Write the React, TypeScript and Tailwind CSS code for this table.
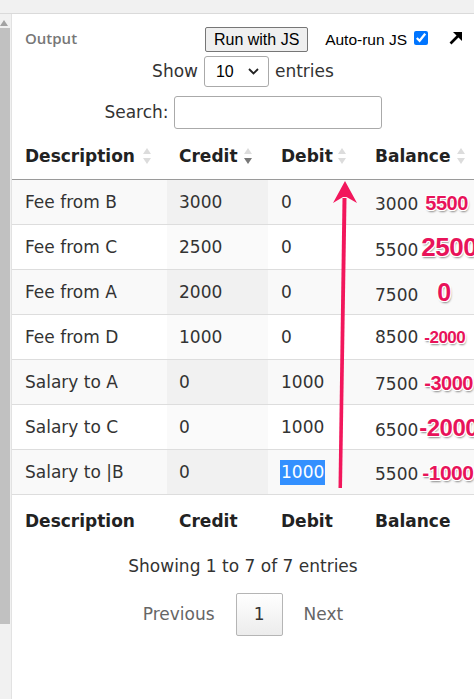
import React from "react";

const rows = [
  { desc: "Fee from B", credit: "3000", debit: "0", bal: "3000", note: "5500", noteCls: "ml-[7px] text-[20px]" },
  { desc: "Fee from C", credit: "2500", debit: "0", bal: "5500", note: "2500", noteCls: "ml-[3px] text-[26px]" },
  { desc: "Fee from A", credit: "2000", debit: "0", bal: "7500", note: "0", noteCls: "ml-[19px] text-[25px]" },
  { desc: "Fee from D", credit: "1000", debit: "0", bal: "8500", note: "-2000", noteCls: "ml-[6px] text-[17px]" },
  { desc: "Salary to A", credit: "0", debit: "1000", bal: "7500", note: "-3000", noteCls: "ml-[6px] text-[20px]" },
  { desc: "Salary to C", credit: "0", debit: "1000", bal: "6500", note: "-2000", noteCls: "ml-[1px] text-[24px]" },
  { desc: "Salary to |B", credit: "0", debit: "1000", bal: "5500", note: "-1000", noteCls: "ml-[4px] text-[21px]" },
];

function SortIcon({ active }: { active?: boolean }) {
  return (
    <svg width="8" height="20" viewBox="0 0 8 20" className="shrink-0">
      <polygon points="4,2 8,8 0,8" fill="#dcdcdc" />
      <polygon points="0,12 8,12 4,18" fill={active ? "#777777" : "#dcdcdc"} />
    </svg>
  );
}

const noteShadow =
  "[text-shadow:1px_0_0_#fff,-1px_0_0_#fff,0_1px_0_#fff,0_-1px_0_#fff,1px_1px_0_#fff,-1px_-1px_0_#fff,1px_-1px_0_#fff,-1px_1px_0_#fff,1px_2px_2px_rgba(0,0,0,0.45)]";

export default function App() {
  return (
    <div className="relative w-[474px] h-[699px] overflow-hidden bg-white font-['DejaVu_Sans',sans-serif] text-[17px] text-[#333]">
      {/* top frame strip */}
      <div className="h-[14px] bg-[#f1f1f1] border-b border-[#dadada]" />

      <div className="flex h-[685px]">
        {/* left scrollbar */}
        <div className="w-[12px] shrink-0 flex flex-col bg-[#f1f1f1] border-r border-[#e2e2e2]">
          <div className="h-[6px]" />
          <svg width="9" height="6" viewBox="0 0 9 6">
            <polygon points="4,0 8,6 0,6" fill="#a3a3a3" />
          </svg>
          <div className="mt-[2px] w-[10px] h-[596px] bg-[#c1c1c1]" />
        </div>

        {/* output pane */}
        <div className="flex-1 min-w-0 overflow-hidden">
          <div className="flex items-center justify-between pl-[13px] pr-[11px] mt-[13px] font-['Liberation_Sans',Arial,sans-serif]">
            <span className="font-['Open_Sans',sans-serif] font-semibold text-[15px] text-[#777] -mt-[3px]">Output</span>
            <div className="flex items-center">
              <button className="h-[25px] w-[103px] bg-[#efefef] border border-[#767676] rounded-[2px] text-[16px] text-black">
                Run with JS
              </button>
              <span className="ml-[17px] text-[15.5px] text-black">Auto-run JS</span>
              <input
                type="checkbox"
                defaultChecked
                readOnly
                className="ml-[7px] w-[14px] h-[14px] m-0 accent-[#0075ff] -mt-[4px]"
              />
              <svg width="14" height="14" viewBox="0 0 14 14" className="ml-[21px] -mt-[3px]">
                <line x1="1.5" y1="12.5" x2="10" y2="4" stroke="#000" strokeWidth="2.6" />
                <polygon points="4,1 13,1 13,10" fill="#000" />
              </svg>
            </div>
          </div>

          <div className="flex items-center justify-center mt-[4px]">
            <span>Show</span>
            <div className="ml-[6px] mr-[6px] w-[65px] h-[31px] border border-[#aaa] rounded-[3px] flex items-center justify-between pl-[11px] pr-[9px] font-['Liberation_Sans',Arial,sans-serif] text-[16px] text-black">
              <span>10</span>
              <svg width="11" height="7" viewBox="0 0 11 7">
                <polyline points="1,1 5.5,5.5 10,1" fill="none" stroke="#222" strokeWidth="1.8" />
              </svg>
            </div>
            <span>entries</span>
          </div>

          <div className="flex items-center justify-center mt-[9px]">
            <span>Search:</span>
            <div className="ml-[5px] w-[208px] h-[33px] border border-[#aaa] rounded-[3px] bg-white" />
          </div>

          <table className="mt-[5px] border-collapse table-fixed w-[469px]">
            <colgroup>
              <col className="w-[155px]" />
              <col className="w-[101px]" />
              <col className="w-[94px]" />
              <col className="w-[119px]" />
            </colgroup>
            <thead>
              <tr className="border-b border-[#9a9a9a]">
                {["Description", "Credit", "Debit", "Balance"].map((h) => (
                  <th key={h} className="h-[45px] p-0 text-left font-bold text-[#222]">
                    <div className={`flex items-center justify-between pr-[16px] ${h === "Credit" ? "pl-[12px]" : "pl-[13px]"}`}>
                      <span>{h}</span>
                      <SortIcon active={h === "Credit"} />
                    </div>
                  </th>
                ))}
              </tr>
            </thead>
            <tbody>
              {rows.map((r, i) => {
                const odd = i % 2 === 0;
                return (
                  <tr key={r.desc} className={`h-[45px] border-b border-[#dddddd] ${odd ? "bg-[#f9f9f9]" : "bg-white"}`}>
                    <td className="pl-[13px] p-0 pt-[2px]">{r.desc}</td>
                    <td className={`pl-[12px] p-0 pt-[2px] ${odd ? "bg-[#f1f1f1]" : "bg-[#fafafa]"}`}>{r.credit}</td>
                    <td className="pl-[13px] p-0 pt-[2px]">
                      {i === 6 ? (
                        <span className="inline-block leading-[25px] bg-[#3390ff] text-white px-[1px] -ml-[1px]">{r.debit}</span>
                      ) : (
                        r.debit
                      )}
                    </td>
                    <td className="pl-[13px] p-0 pt-[2px] whitespace-nowrap">
                      <span>{r.bal}</span>
                      <span
                        className={`${r.noteCls} font-['Liberation_Sans',Arial,sans-serif] font-bold text-[#e8135a] tracking-[-0.5px] ${noteShadow}`}
                      >
                        {r.note}
                      </span>
                    </td>
                  </tr>
                );
              })}
            </tbody>
            <tfoot>
              <tr className="border-t border-[#9a9a9a]">
                {["Description", "Credit", "Debit", "Balance"].map((h) => (
                  <th key={h} className={`h-[53px] p-0 pt-[1px] text-left font-bold text-[#222] ${h === "Credit" ? "pl-[12px]" : "pl-[13px]"}`}>
                    {h}
                  </th>
                ))}
              </tr>
            </tfoot>
          </table>

          <div className="text-center mt-[9px] leading-[20px]">Showing 1 to 7 of 7 entries</div>

          <div className="flex items-center justify-center mt-[17px] text-[#666]">
            <span>Previous</span>
            <div className="mx-[21px] w-[47px] h-[43px] border border-[#b5b5b5] rounded-[2px] bg-gradient-to-b from-white to-[#ececec] flex items-center justify-center text-[#333]">
              1
            </div>
            <span>Next</span>
          </div>
        </div>
      </div>

      {/* pink annotation arrow */}
      <svg className="absolute inset-0 pointer-events-none" width="474" height="699" viewBox="0 0 474 699">
        <polygon points="338.5,488 342,488 346.5,198 342.5,198" fill="#f2175c" />
        <polygon points="345,181 357,203 346.5,197 343,197 333,203" fill="#f2175c" />
      </svg>
    </div>
  );
}
